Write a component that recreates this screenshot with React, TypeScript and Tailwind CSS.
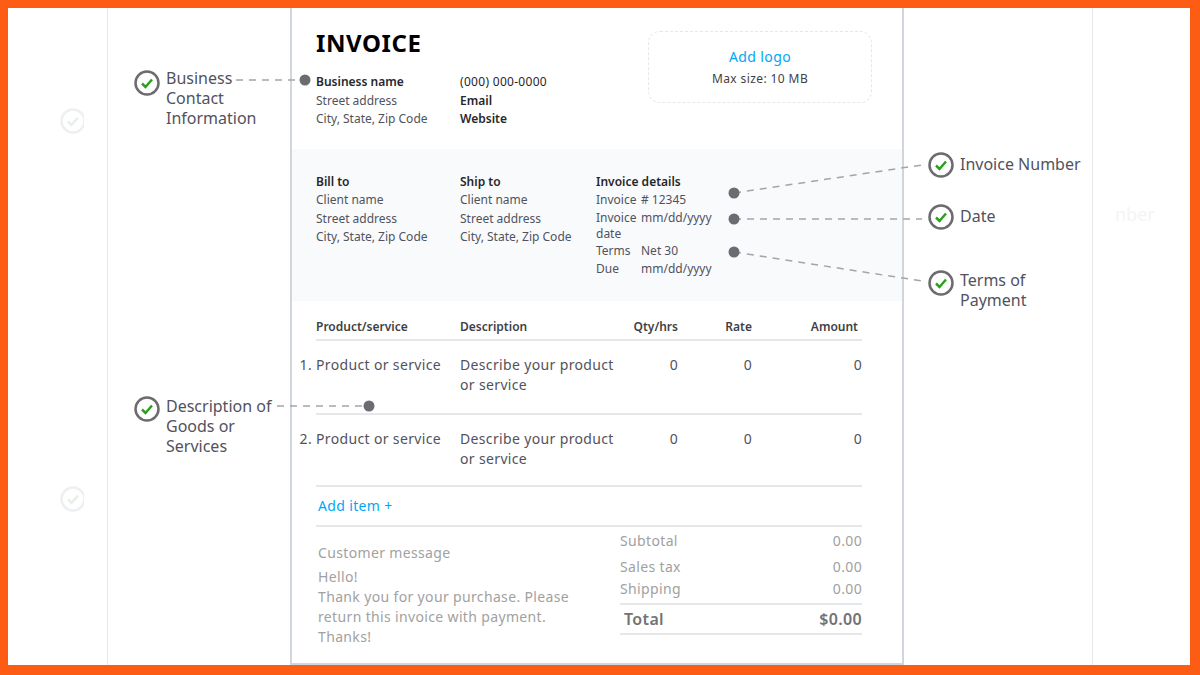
const FONT = { fontFamily: '"Noto Sans", "Liberation Sans", sans-serif' };

function Check({ ghost = false, className = '' }: { ghost?: boolean; className?: string }) {
  return (
    <svg viewBox="0 0 26 26" className={`size-6.5 shrink-0 ${className}`} fill="none">
      <circle cx="13" cy="13" r="11.5" stroke={ghost ? '#eeeff0' : '#6b6b70'} strokeWidth="2.5" />
      <path d="M8 13.5l3.5 3.5L18 9.5" stroke={ghost ? '#e8efe6' : '#2ca01c'} strokeWidth="2.5" />
    </svg>
  );
}

function Callout({ lines, className = '', iconClass = 'mt-0.5' }: { lines: string[]; className?: string; iconClass?: string }) {
  return (
    <div className={`flex gap-1.5 text-base leading-5 text-zinc-600 ${className}`}>
      <Check className={iconClass} />
      <div>
        {lines.map((l) => (
          <div key={l}>{l}</div>
        ))}
      </div>
    </div>
  );
}

function Ghost() {
  return (
    <div className="w-6 overflow-hidden">
      <Check ghost />
    </div>
  );
}

function Address({ title, lines }: { title: string; lines: string[] }) {
  return (
    <div>
      <div className="font-semibold text-zinc-800">{title}</div>
      {lines.map((l) => (
        <div key={l}>{l}</div>
      ))}
    </div>
  );
}

function ItemRow({ n, className }: { n: number; className: string }) {
  return (
    <div className={`flex border-b-2 border-gray-200 pt-3.5 text-sm leading-5 tracking-wide text-zinc-600 ${className}`}>
      <div className="-ml-5 w-5 pr-1 text-right">{n}.</div>
      <div className="w-36">Product or service</div>
      <div className="w-40">
        Describe your product
        <br />
        or service
      </div>
      <div className="w-14.5 text-right">0</div>
      <div className="w-18.5 text-right">0</div>
      <div className="flex-1 text-right">0</div>
    </div>
  );
}

function Total({ label, value, className = '' }: { label: string; value: string; className?: string }) {
  return (
    <div className={`flex justify-between ${className}`}>
      <span>{label}</span>
      <span>{value}</span>
    </div>
  );
}

export default function App() {
  return (
    <div style={FONT} className="relative h-[675px] w-[1200px] overflow-hidden bg-[#fd5c14] pt-2 pr-2.5 pb-2.5 pl-2">
      <div className="flex h-full bg-white">
        <div className="flex w-25 flex-col border-r border-gray-200 pt-25 pl-13">
          <Ghost />
          <div className="mt-88">
            <Ghost />
          </div>
        </div>

        <div className="w-[182px] pt-15 pl-6.5">
          <Callout lines={['Business', 'Contact', 'Information']} />
          <Callout lines={['Description of', 'Goods or', 'Services']} className="mt-67" iconClass="" />
        </div>

        <div className="w-[614px] border-x-2 border-b-2 border-gray-300 pt-px">
          <div className="flex justify-between pt-4.5 pr-7.5 pl-6">
            <div>
              <div className="text-2xl leading-8 font-bold tracking-wide text-black">INVOICE</div>
              <div className="mt-3.5 grid grid-cols-[144px_1fr] text-xs leading-[18.5px] text-zinc-600">
                <div className="font-semibold text-zinc-800">Business name</div>
                <div className="tracking-wide text-zinc-800">(000) 000-0000</div>
                <div>Street address</div>
                <div className="font-semibold text-zinc-800">Email</div>
                <div>City, State, Zip Code</div>
                <div className="font-semibold text-zinc-800">Website</div>
              </div>
            </div>
            <div className="mt-1 flex h-18 w-56 flex-col items-center justify-center rounded-xl border border-dashed border-gray-200 tracking-wide">
              <div className="text-sm leading-6 text-sky-500">Add logo</div>
              <div className="text-xs leading-5 text-zinc-700">Max size: 10 MB</div>
            </div>
          </div>

          <div className="mt-5 flex h-38 bg-slate-50 pt-6 pl-6 text-xs leading-[18.5px] text-zinc-600">
            <div className="w-36">
              <Address title="Bill to" lines={['Client name', 'Street address', 'City, State, Zip Code']} />
            </div>
            <div className="w-34">
              <Address title="Ship to" lines={['Client name', 'Street address', 'City, State, Zip Code']} />
            </div>
            <div className="w-30">
              <div className="font-semibold text-zinc-800">Invoice details</div>
              <div className="grid grid-cols-[45px_1fr]">
                <div>Invoice</div>
                <div># 12345</div>
                <div className="leading-4">Invoice date</div>
                <div className="leading-4">mm/dd/yyyy</div>
                <div>Terms</div>
                <div>Net 30</div>
                <div>Due</div>
                <div>mm/dd/yyyy</div>
              </div>
            </div>
          </div>

          <div className="pr-10 pl-6">
            <div className="flex h-10 items-center border-b-2 border-gray-200 pt-3.5 text-xs font-semibold text-zinc-700">
              <div className="w-36">Product/service</div>
              <div className="w-40">Description</div>
              <div className="w-14.5 text-right">Qty/hrs</div>
              <div className="w-18.5 text-right">Rate</div>
              <div className="flex-1 pr-1 text-right">Amount</div>
            </div>
            <ItemRow n={1} className="h-18.5" />
            <ItemRow n={2} className="h-18" />
            <div className="flex h-10 items-center border-b-2 border-gray-200 pl-0.5 text-sm tracking-wide text-sky-500">Add item +</div>

            <div className="flex text-sm tracking-wide text-neutral-400">
              <div className="w-76 pt-4 pr-5 pl-0.5 leading-5">
                <div className="mb-1">Customer message</div>
                <div>Hello!</div>
                <div>Thank you for your purchase. Please return this invoice with payment.</div>
                <div>Thanks!</div>
              </div>
              <div className="flex-1 pt-1 leading-5">
                <Total label="Subtotal" value="0.00" />
                <Total label="Sales tax" value="0.00" className="mt-1.5" />
                <Total label="Shipping" value="0.00" className="mt-0.5" />
                <Total
                  label="Total"
                  value="$0.00"
                  className="mt-1 border-y-2 border-gray-200 py-0.5 pl-1 text-base font-semibold text-neutral-500"
                />
              </div>
            </div>
          </div>
        </div>

        <div className="w-47 pt-35.5 pl-6">
          <Callout lines={['Invoice Number']} className="items-center" />
          <Callout lines={['Date']} className="mt-6 items-center" />
          <Callout lines={['Terms of', 'Payment']} className="mt-10" iconClass="" />
        </div>

        <div className="flex-1 border-l border-gray-200 pt-47 pl-5.5 text-lg leading-9 text-gray-100">nber</div>
      </div>

      {/* leader lines and their dots sit over the page */}
      <svg className="pointer-events-none absolute inset-0" width="1200" height="675" fill="none" stroke="#a3a5aa" strokeWidth="1.5" strokeDasharray="7 6">
        <path d="M236 80H300" />
        <path d="M277 406H364" />
        <path d="M734 193L922 165" />
        <path d="M734 219H922" />
        <path d="M734 252L922 281" />
        <g fill="#6b6c72" stroke="none">
          <circle cx="305" cy="80" r="5.5" />
          <circle cx="369" cy="406" r="5.5" />
          <circle cx="734" cy="193" r="5.5" />
          <circle cx="734" cy="219" r="5.5" />
          <circle cx="734" cy="252" r="5.5" />
        </g>
      </svg>
    </div>
  );
}
